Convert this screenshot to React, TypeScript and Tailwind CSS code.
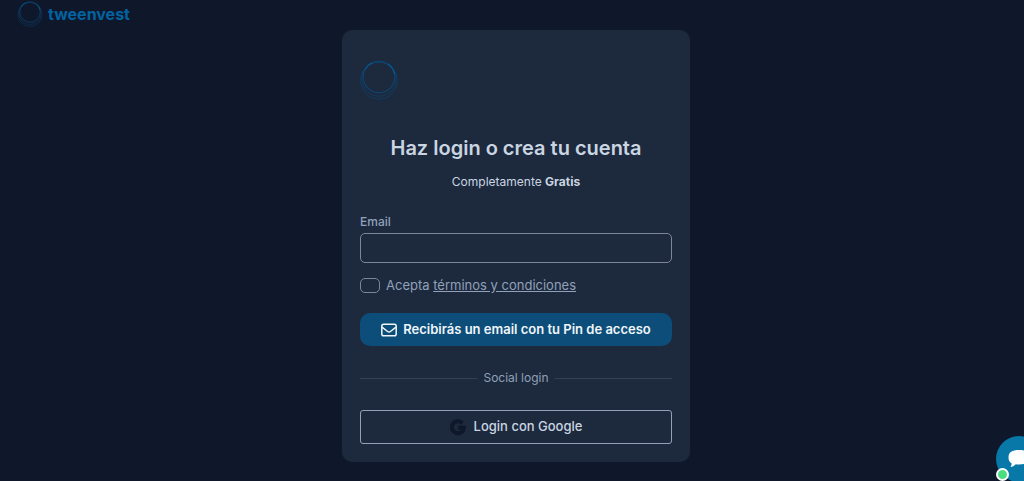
import React from "react";

function RingLogo({ className }: { className: string }) {
  return (
    <svg className={className} viewBox="0 0 38 40" fill="none" stroke="#0c4674" aria-hidden="true">
      <ellipse cx="19" cy="17" rx="15.8" ry="15.8" strokeWidth="1.1" />
      <ellipse cx="19" cy="19" rx="17.2" ry="17.2" strokeWidth="0.9" opacity="0.7" />
      <ellipse cx="19" cy="20.7" rx="18.4" ry="18.4" strokeWidth="0.9" opacity="0.7" />
      <path d="M5 9.500A15.800 15.800 0 0 1 12 2.800M28 4a15.800 15.800 0 0 1 6.500 10" stroke="#07598f" strokeWidth="1.2" />
    </svg>
  );
}

function EnvelopeIcon() {
  return (
    <svg className="h-4 w-4 shrink-0" viewBox="0 0 16 16" fill="none" stroke="currentColor" strokeWidth="1.5" strokeLinejoin="round" aria-hidden="true">
      <rect x="0.8" y="2.3" width="14.4" height="11.4" rx="1.8" />
      <path d="M1 5.2l5.6 4.3c.9.7 1.9.7 2.8 0L15 5.2" />
    </svg>
  );
}

function GoogleIcon() {
  return (
    <svg className="h-[17px] w-4 shrink-0" viewBox="0 0 16 16" fill="none" stroke="#0f172a" strokeWidth="4" aria-hidden="true">
      <path d="M12.400 3.800A6 6 0 1 0 13.900 8.300H8.200" />
    </svg>
  );
}

export default function App() {
  return (
    <div className="min-h-screen bg-[#0f172a] font-['Inter',sans-serif] text-slate-300">
      <header className="flex h-[30px] items-start px-4">
        <a href="#" className="flex items-center gap-1 text-base leading-7 font-bold text-[#0362a0]">
          <RingLogo className="h-[26px] w-7" />
          tweenvest
        </a>
      </header>

      <main className="pr-4 pb-[19px] pl-6">
        <form className="mx-auto flex w-full max-w-[348px] flex-col rounded-[10px] bg-slate-800 px-[18px] pt-[30px] pb-[18px]">
          <RingLogo className="h-10 w-[38px]" />
          <h1 className="mt-[34px] text-center text-xl leading-7 font-semibold">Haz login o crea tu cuenta</h1>
          <p className="mt-3 text-center text-xs leading-4">
            Completamente <strong>Gratis</strong>
          </p>

          <label htmlFor="email" className="mt-6 text-xs leading-4 font-medium text-slate-400">
            Email
          </label>
          <input
            id="email"
            type="email"
            className="mt-[3px] h-[30px] w-full rounded-[5px] border border-[#7b8798] bg-transparent px-2 text-sm outline-none"
          />

          <div className="mt-3 flex items-center gap-1.5 text-[13px] leading-5 text-slate-400">
            <input
              id="terms"
              type="checkbox"
              className="h-[15px] w-5 shrink-0 appearance-none rounded-[5px] border border-[#7b8798] checked:bg-sky-700"
            />
            <label htmlFor="terms">
              Acepta{" "}
              <a href="#" className="underline">
                términos y condiciones
              </a>
            </label>
          </div>

          <button type="submit" className="mt-[18px] flex h-[33px] items-center justify-center gap-1.5 rounded-[10px] bg-[#0c4e79] text-[13px] font-semibold text-slate-100">
            <EnvelopeIcon />
            Recibirás un email con tu Pin de acceso
          </button>

          <div className="mt-6 flex items-center gap-1.5 text-xs leading-4 text-slate-400">
            <span className="h-px flex-1 bg-slate-700" />
            Social login
            <span className="h-px flex-1 bg-slate-700" />
          </div>

          <button type="button" className="mt-6 flex h-[34px] items-center justify-center gap-2 rounded-[3px] border border-slate-400 text-[13px] font-medium text-slate-300">
            <GoogleIcon />
            Login con Google
          </button>
        </form>
      </main>

      <div className="fixed right-0 bottom-0 h-[45px] w-7 overflow-hidden">
        <button type="button" aria-label="Chat" className="block h-[46px] w-[46px] rounded-full bg-[#0878a8]">
          <svg className="h-[46px] w-[46px]" viewBox="0 0 46 46" fill="#fff" aria-hidden="true">
            <path d="M23 14c7 0 11 2 11 7.200s-4 7.300-11 7.300c-1.200 0-2.300 0-3.300-.2-1.200 1.500-3 2.500-5.200 2.700.9-1.100 1.200-2.300 1-3.800C13.200 26 12.500 24 12.500 21.200 12.500 16 16 14 23 14z" />
          </svg>
        </button>
        <span className="absolute bottom-0 left-0 h-[13px] w-[13px] rounded-full border-2 border-white bg-[#4ade80]" />
      </div>
    </div>
  );
}
